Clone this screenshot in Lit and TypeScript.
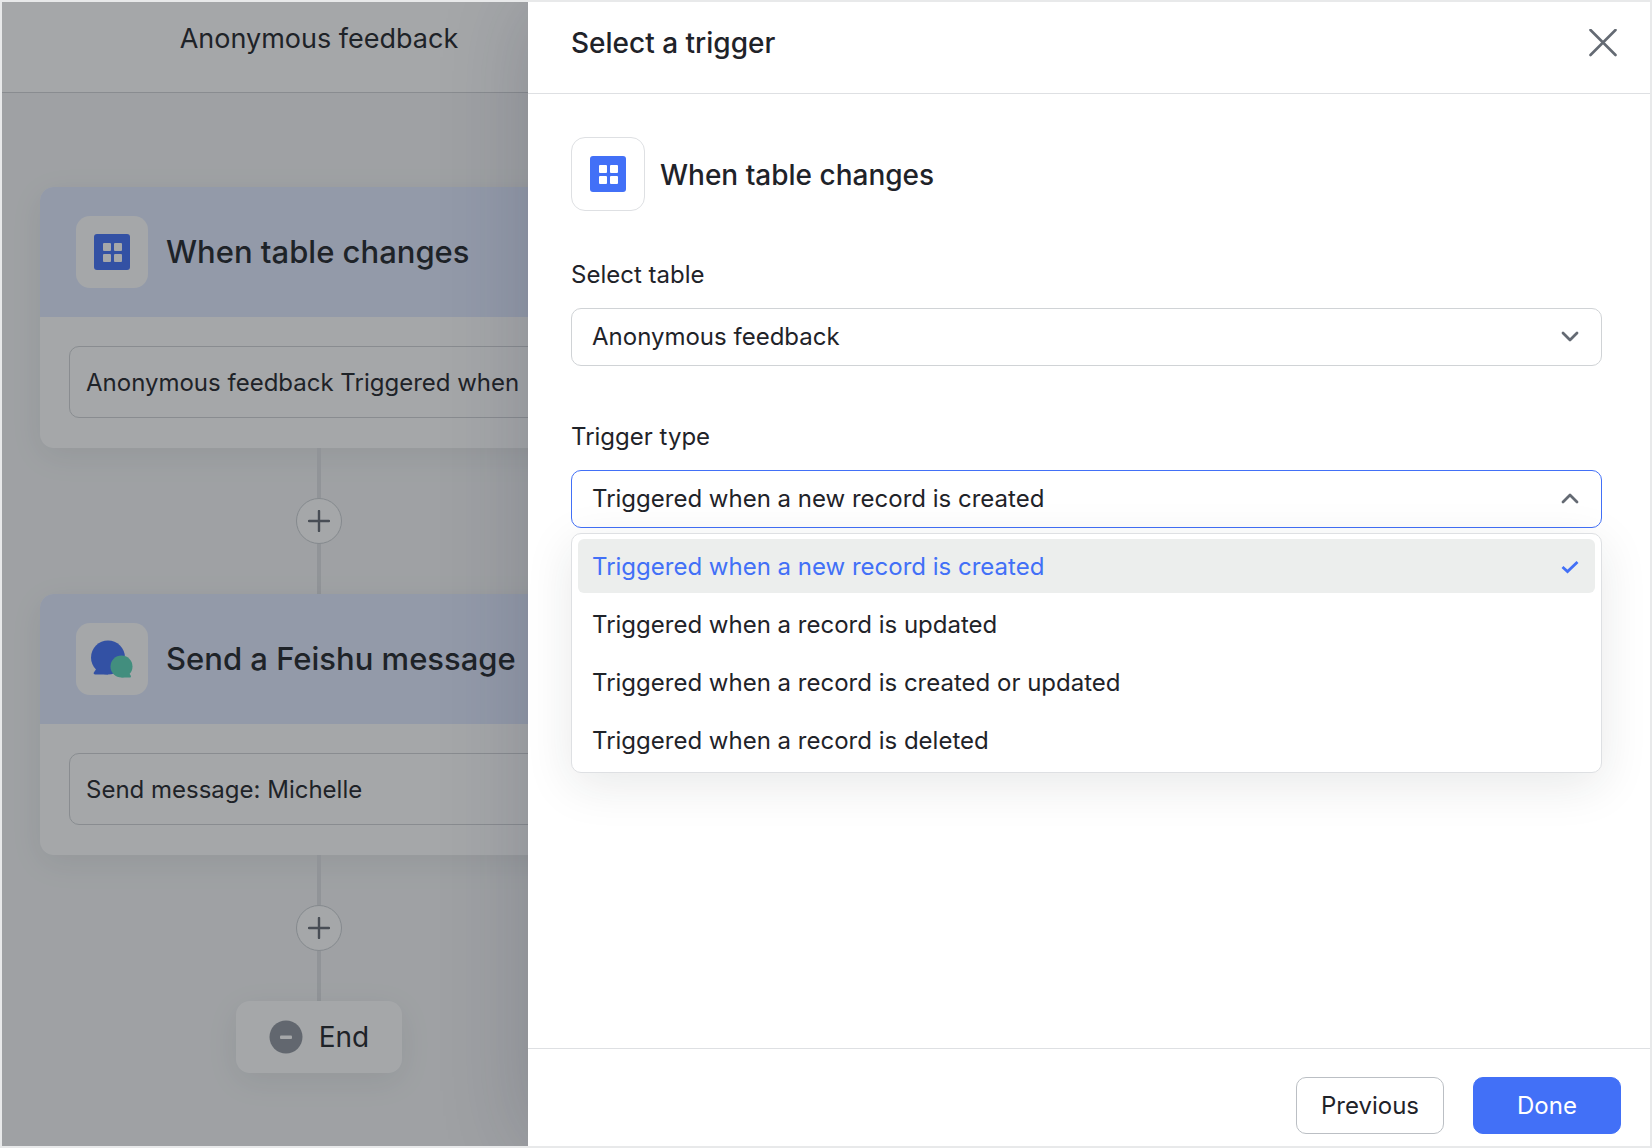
import { LitElement, html, css, svg } from "lit";
import { customElement, state } from "lit/decorators.js";

const tableIcon = svg`
  <svg viewBox="0 0 36 36" width="36" height="36" aria-hidden="true">
    <rect width="36" height="36" rx="3" fill="#4270f7" />
    <g fill="#fff">
      <rect x="9" y="9" width="8" height="8" rx="1" />
      <rect x="20" y="9" width="8" height="8" rx="1" />
      <rect x="9" y="20" width="8" height="8" rx="1" />
      <rect x="20" y="20" width="8" height="8" rx="1" />
    </g>
  </svg>`;

const messageIcon = svg`
  <svg viewBox="0 0 42 38" width="42" height="38" aria-hidden="true">
    <g fill="#4270f7">
      <circle cx="17" cy="17.500" r="17" />
      <path d="M6 28L3 32.200c-.8 1.200-.2 2.300 1.200 2.300H17V28Z" />
    </g>
    <g fill="#5ad6b8">
      <circle cx="30.500" cy="26.500" r="11" />
      <path d="M38 33l1.700 2.400c.7 1.200.1 2.100-1.200 2.100h-8V33Z" />
    </g>
  </svg>`;

const plusIcon = svg`
  <svg viewBox="0 0 22 22" width="22" height="22" aria-hidden="true">
    <path d="M11 1v20M1 11h20" stroke="#646a73" stroke-width="2.400" stroke-linecap="round" />
  </svg>`;

const chevron = (up: boolean) => svg`
  <svg class="chevron" viewBox="0 0 18 12" width="18" height="12" aria-hidden="true">
    <path d=${up ? "M2 9l7-7 7 7" : "M2 2l7 7 7-7"} fill="none" stroke="#646a73"
      stroke-width="2.800" stroke-linecap="round" stroke-linejoin="round" />
  </svg>`;

const tables = ["Anonymous feedback"];
const triggers = [
  "Triggered when a new record is created",
  "Triggered when a record is updated",
  "Triggered when a record is created or updated",
  "Triggered when a record is deleted",
];
const steps = [
  { icon: tableIcon, title: "When table changes", detail: "Anonymous feedback Triggered when" },
  { icon: messageIcon, title: "Send a Feishu message", detail: "Send message: Michelle" },
];

@customElement("app-root")
export class AppRoot extends LitElement {
  @state() private trigger = triggers[0];

  static styles = css`
    :host {
      display: block;
      --ink: #1f2329;
      --line: #dee0e3;
      --brand: #4270f7;
      font-family: Inter, "Liberation Sans", sans-serif;
      font-size: 24px;
      line-height: 32px;
      color: var(--ink);
    }
    * { box-sizing: border-box; }
    h1, h2, p { margin: 0; font-weight: 400; }
    button, select { font: inherit; color: inherit; margin: 0; }
    svg { display: block; flex: none; }

    .frame {
      display: grid;
      grid-template-columns: 526px minmax(0, 1fr);
      min-height: 100vh;
      border: 2px solid #e8e9ea;
      background: #fff;
    }

    .workspace {
      position: relative;
      overflow: hidden;
      background: #f5f6f7;
    }
    .mask {
      position: absolute;
      inset: 0;
      background: rgba(31, 35, 41, 0.4);
    }
    .board { width: 634px; }
    .board-head {
      height: 91px;
      padding-top: 19px;
      border-bottom: 1px solid #d0d3d6;
      background: #fff;
      text-align: center;
      font-size: 27px;
      line-height: 36px;
    }
    .flow {
      display: flex;
      flex-direction: column;
      align-items: center;
      padding: 94px 38px 0;
    }
    .step {
      width: 100%;
      border-radius: 14px;
      background: #fff;
      box-shadow: 0 8px 32px rgba(31, 35, 41, 0.08);
    }
    .step-head {
      display: flex;
      align-items: center;
      gap: 18px;
      height: 130px;
      padding: 0 36px;
      border-radius: 14px 14px 0 0;
      background: #e1eaff;
    }
    .step-head h2 {
      font-size: 31px;
      line-height: 40px;
      font-weight: 500;
      white-space: nowrap;
    }
    .tile {
      display: grid;
      place-items: center;
      flex: none;
      width: 72px;
      height: 72px;
      border-radius: 14px;
      background: #fff;
    }
    .step-body { padding: 29px 29px 30px; }
    .detail {
      padding: 20px 16px 18px;
      border: 1px solid #d0d3d6;
      border-radius: 10px;
      white-space: nowrap;
    }
    .link {
      display: flex;
      flex-direction: column;
      align-items: center;
    }
    .link::before, .link::after {
      content: "";
      width: 4px;
      height: 50px;
      background: var(--line);
    }
    .add {
      display: grid;
      place-items: center;
      width: 46px;
      height: 46px;
      padding: 0;
      border: 1px solid #c9cdd1;
      border-radius: 50%;
      background: #fff;
    }
    .end {
      display: flex;
      align-items: center;
      gap: 16px;
      height: 72px;
      padding: 0 33px;
      border-radius: 14px;
      background: #fff;
      box-shadow: 0 8px 32px rgba(31, 35, 41, 0.08);
      font-size: 28px;
    }

    .drawer {
      position: relative;
      display: flex;
      flex-direction: column;
      background: #fff;
      box-shadow: 0 0 84px rgba(31, 35, 60, 0.2);
      clip-path: inset(0 0 0 -120px);
    }
    .drawer-head {
      display: flex;
      align-items: center;
      justify-content: space-between;
      height: 92px;
      padding: 0 31px 10px 43px;
      border-bottom: 1px solid var(--line);
    }
    .drawer-head h1, .source h2 {
      padding-top: 1px;
      font-size: 28px;
      line-height: 36px;
      font-weight: 500;
    }
    .close {
      display: grid;
      place-items: center;
      width: 32px;
      height: 32px;
      padding: 0;
      border: 0;
      background: none;
    }
    .drawer-body { flex: 1; padding: 43px 48px 0 43px; }
    .source { display: flex; align-items: center; gap: 15px; }
    .source .tile { width: 74px; height: 74px; border: 1px solid var(--line); }
    .field {
      display: grid;
      gap: 17px;
      margin-top: 48px;
    }
    .field + .field { margin-top: 55px; }
    .control { position: relative; display: grid; align-items: center; }
    select {
      grid-area: 1 / 1;
      width: 100%;
      height: 58px;
      padding: 0 56px 0 20px;
      border: 1px solid #d0d3d6;
      border-radius: 10px;
      background: #fff;
      appearance: none;
      outline: none;
    }
    .open select { border-color: var(--brand); }
    .chevron {
      grid-area: 1 / 1;
      justify-self: end;
      margin-right: 23px;
      pointer-events: none;
      z-index: 1;
    }
    .menu {
      position: absolute;
      top: 63px;
      left: 0;
      right: 0;
      display: grid;
      gap: 4px;
      padding: 5px 6px;
      border: 1px solid var(--line);
      border-radius: 10px;
      background: #fff;
      box-shadow: 0 12px 48px rgba(31, 35, 41, 0.1);
      z-index: 2;
    }
    .option {
      display: flex;
      align-items: center;
      justify-content: space-between;
      height: 54px;
      padding: 1px 16px 0 14px;
      border: 0;
      border-radius: 6px;
      background: none;
      text-align: left;
    }
    .option[aria-selected="true"] { background: #eceeed; color: var(--brand); }

    .drawer-foot {
      display: flex;
      justify-content: flex-end;
      gap: 29px;
      padding: 28px 29px 12px;
      border-top: 1px solid var(--line);
    }
    .action {
      min-width: 148px;
      height: 57px;
      padding: 1px 20px 0;
      border: 1px solid #bbbfc4;
      border-radius: 10px;
      background: #fff;
    }
    .primary { border-color: var(--brand); background: var(--brand); color: #fff; }
  `;

  render() {
    return html`
      <div class="frame">
        <section class="workspace" aria-label="Workflow">
          <div class="board">
            <header class="board-head">Anonymous feedback</header>
            <div class="flow">
              ${steps.map((s) => html`
                <article class="step">
                  <div class="step-head"><span class="tile">${s.icon}</span><h2>${s.title}</h2></div>
                  <div class="step-body"><p class="detail">${s.detail}</p></div>
                </article>
                <div class="link">
                  <button class="add" type="button" aria-label="Add step">${plusIcon}</button>
                </div>`)}
              <div class="end">
                <svg viewBox="0 0 34 34" width="34" height="34" aria-hidden="true">
                  <circle cx="17" cy="17" r="16.500" fill="#8f959e" />
                  <rect x="11" y="15.500" width="12" height="3.500" rx="1" fill="#fff" />
                </svg>
                End
              </div>
            </div>
          </div>
          <div class="mask"></div>
        </section>

        <section class="drawer" role="dialog" aria-labelledby="drawer-title">
          <header class="drawer-head">
            <h1 id="drawer-title">Select a trigger</h1>
            <button class="close" type="button" aria-label="Close">
              <svg viewBox="0 0 28 28" width="28" height="28" aria-hidden="true">
                <path d="M1.500 1l25 25M26.500 1l-25 25" stroke="#646a73" stroke-width="2.600" stroke-linecap="round" />
              </svg>
            </button>
          </header>

          <div class="drawer-body">
            <div class="source"><span class="tile">${tableIcon}</span><h2>When table changes</h2></div>

            <div class="field">
              <label for="table">Select table</label>
              <div class="control">
                <select id="table">${tables.map((t) => html`<option>${t}</option>`)}</select>
                ${chevron(false)}
              </div>
            </div>

            <div class="field">
              <label for="trigger">Trigger type</label>
              <div class="control open">
                <select id="trigger" .value=${this.trigger}
                  @change=${(e: Event) => (this.trigger = (e.target as HTMLSelectElement).value)}>
                  ${triggers.map((t) => html`<option ?selected=${t === this.trigger}>${t}</option>`)}
                </select>
                ${chevron(true)}
                <div class="menu" role="listbox" aria-label="Trigger type">
                  ${triggers.map((t) => html`
                    <button class="option" type="button" role="option"
                      aria-selected=${t === this.trigger ? "true" : "false"}
                      @click=${() => (this.trigger = t)}>
                      ${t}
                      ${t === this.trigger
                        ? html`<svg viewBox="0 0 18 14" width="18" height="14" aria-hidden="true">
                            <path d="M1.500 7l5 4.500L16.500 2" fill="none" stroke="#4270f7" stroke-width="2.800" />
                          </svg>`
                        : ""}
                    </button>`)}
                </div>
              </div>
            </div>
          </div>

          <footer class="drawer-foot">
            <button class="action" type="button">Previous</button>
            <button class="action primary" type="button">Done</button>
          </footer>
        </section>
      </div>`;
  }
}
